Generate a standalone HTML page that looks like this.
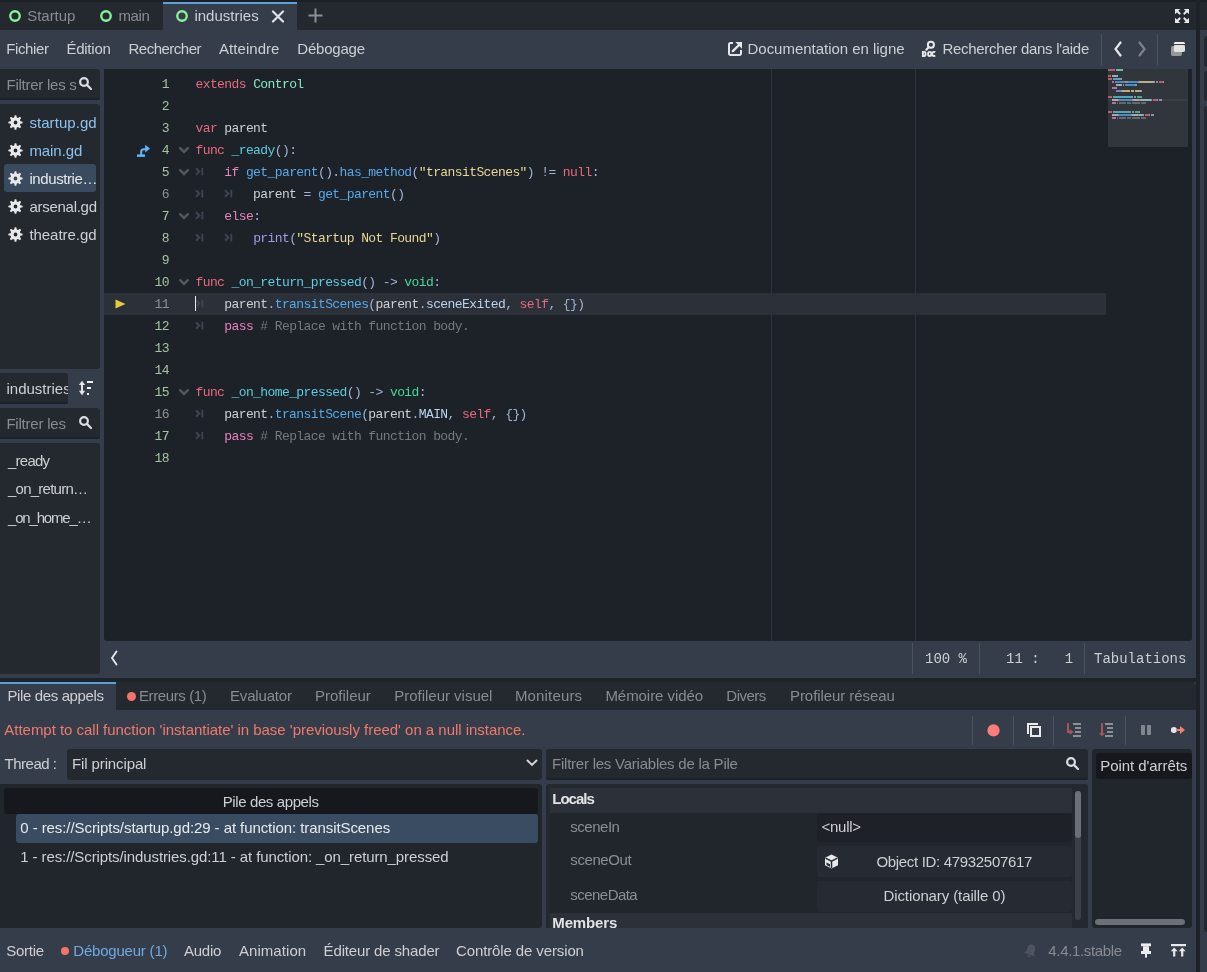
<!DOCTYPE html>
<html><head><meta charset="utf-8"><style>
html,body{margin:0;padding:0;width:1207px;height:972px;overflow:hidden;background:#363d4a;}
body>div,body>svg,body div,body svg{position:absolute;}
span{position:static !important;}
</style></head><body>
<div id="root" style="left:0;top:0;width:1207px;height:972px;overflow:hidden;will-change:transform;background:#363d4a">
<div style="left:0px;top:0px;width:1196px;height:30px;background:#24292f;"></div>
<div style="left:0px;top:0px;width:1207px;height:2px;background:#1c1f25;"></div>
<div style="left:163px;top:2px;width:134px;height:28px;background:#363d4a;"></div>
<div style="left:163px;top:2px;width:134px;height:2px;background:#5c9fd9;"></div>
<svg style="left:8px;top:9px" width="14" height="14" viewBox="0 0 14 14"><circle cx="7" cy="7" r="4.75" fill="none" stroke="#8cf29a" stroke-width="2.3"/></svg>
<svg style="left:99px;top:9px" width="14" height="14" viewBox="0 0 14 14"><circle cx="7" cy="7" r="4.75" fill="none" stroke="#8cf29a" stroke-width="2.3"/></svg>
<svg style="left:175px;top:9px" width="14" height="14" viewBox="0 0 14 14"><circle cx="7" cy="7" r="4.75" fill="none" stroke="#8cf29a" stroke-width="2.3"/></svg>
<div style="left:27.30px;top:8.10px;font-size:15px;line-height:15px;font-family:'Liberation Sans',sans-serif;color:#888b92;white-space:pre;letter-spacing:-0.050px;">Startup</div>
<div style="left:118.50px;top:8.10px;font-size:15px;line-height:15px;font-family:'Liberation Sans',sans-serif;color:#888b92;white-space:pre;letter-spacing:-0.400px;">main</div>
<div style="left:194.40px;top:8.10px;font-size:15px;line-height:15px;font-family:'Liberation Sans',sans-serif;color:#cdcfd2;white-space:pre;letter-spacing:0.011px;">industries</div>
<svg style="left:271px;top:10px" width="14" height="13" viewBox="0 0 14 13"><path d="M2 1.5L12 11.5M12 1.5L2 11.5" stroke="#e0e2e5" stroke-width="2.2" stroke-linecap="round"/></svg>
<svg style="left:307.5px;top:8.3px" width="15" height="15" viewBox="0 0 15 15"><path d="M7.5 0.5V14.5M0.5 7.5H14.5" stroke="#8a8e95" stroke-width="2"/></svg>
<svg style="left:1175px;top:9px" width="14" height="14" viewBox="0 0 14 14"><g fill="#e6e7e9"><path d="M0 0H5.2L0 5.2Z M14 0H8.8L14 5.2Z M0 14H5.2L0 8.8Z M14 14H8.8L14 8.8Z"/></g><path d="M1.5 1.5L4.6 4.6 M12.5 1.5L9.4 4.6 M1.5 12.5L4.6 9.4 M12.5 12.5L9.4 9.4" stroke="#e6e7e9" stroke-width="2.1" stroke-linecap="round"/></svg>
<div style="left:0px;top:30px;width:1196px;height:39px;background:#363d4a;"></div>
<div style="left:6.30px;top:41.20px;font-size:15px;line-height:15px;font-family:'Liberation Sans',sans-serif;color:#cdcfd2;white-space:pre;letter-spacing:-0.400px;">Fichier</div>
<div style="left:66.40px;top:41.20px;font-size:15px;line-height:15px;font-family:'Liberation Sans',sans-serif;color:#cdcfd2;white-space:pre;letter-spacing:-0.233px;">Édition</div>
<div style="left:128.50px;top:41.20px;font-size:15px;line-height:15px;font-family:'Liberation Sans',sans-serif;color:#cdcfd2;white-space:pre;letter-spacing:-0.500px;">Rechercher</div>
<div style="left:219.00px;top:41.20px;font-size:15px;line-height:15px;font-family:'Liberation Sans',sans-serif;color:#cdcfd2;white-space:pre;letter-spacing:0.050px;">Atteindre</div>
<div style="left:297.30px;top:41.20px;font-size:15px;line-height:15px;font-family:'Liberation Sans',sans-serif;color:#cdcfd2;white-space:pre;letter-spacing:-0.214px;">Débogage</div>
<svg style="left:727px;top:41px" width="16" height="16" viewBox="0 0 16 16"><path d="M6 2H3.5A1.5 1.5 0 0 0 2 3.5V12.5A1.5 1.5 0 0 0 3.5 14H12.5A1.5 1.5 0 0 0 14 12.5V9" fill="none" stroke="#e6e7e9" stroke-width="2"/><path d="M8.3 1H15V7.7Z" fill="#e6e7e9"/><path d="M12 4L5.8 10.2" stroke="#e6e7e9" stroke-width="2.4" stroke-linecap="round"/></svg>
<div style="left:747.50px;top:41.20px;font-size:15px;line-height:15px;font-family:'Liberation Sans',sans-serif;color:#cdcfd2;white-space:pre;letter-spacing:-0.024px;">Documentation en ligne</div>
<svg style="left:920px;top:40px" width="18" height="18" viewBox="0 0 18 18"><circle cx="10.9" cy="4.8" r="3.05" fill="none" stroke="#e6e7e9" stroke-width="2"/><path d="M8.7 7.2L6.3 9.7" stroke="#e6e7e9" stroke-width="2.1" stroke-linecap="round"/><path d="M2.9 11.9H4.1Q5.6 11.9 5.6 13.95Q5.6 16 4.1 16H2.9Z" fill="none" stroke="#e6e7e9" stroke-width="1.9"/><ellipse cx="9.7" cy="13.95" rx="1.65" ry="2.05" fill="none" stroke="#e6e7e9" stroke-width="1.9"/><path d="M15.3 12.2Q14.7 11.9 13.9 11.9Q12.2 11.9 12.2 13.95Q12.2 16 13.9 16Q14.7 16 15.3 15.7" fill="none" stroke="#e6e7e9" stroke-width="1.9"/></svg>
<div style="left:942.40px;top:41.20px;font-size:15px;line-height:15px;font-family:'Liberation Sans',sans-serif;color:#cdcfd2;white-space:pre;letter-spacing:-0.290px;">Rechercher dans l'aide</div>
<div style="left:1101px;top:34px;width:1px;height:31px;background:#4b5261;"></div>
<div style="left:1157px;top:34px;width:1px;height:31px;background:#4b5261;"></div>
<svg style="left:1113px;top:41px" width="10" height="16" viewBox="0 0 10 16"><path d="M7.5 1.5L2.5 8L7.5 14.5" fill="none" stroke="#e6e7e9" stroke-width="2.2" stroke-linecap="round"/></svg>
<svg style="left:1137px;top:41px" width="10" height="16" viewBox="0 0 10 16"><path d="M2.5 1.5L7.5 8L2.5 14.5" fill="none" stroke="#7c818a" stroke-width="2.2" stroke-linecap="round"/></svg>
<svg style="left:1170px;top:41px" width="16" height="16" viewBox="0 0 16 16"><rect x="1" y="4.9" width="10.9" height="10" rx="1.6" fill="#979797"/><path d="M3.8 3V2.6A1.6 1.6 0 0 1 5.4 1H13.4A1.6 1.6 0 0 1 15 2.6V3Z" fill="#efeff0"/><rect x="3.8" y="4" width="11.2" height="6.9" rx="1.4" fill="#e2e2e3"/></svg>
<div style="left:1196px;top:0px;width:4px;height:972px;background:#1e2229;"></div>
<div style="left:1200px;top:2px;width:7px;height:28px;background:#24292f;"></div>
<div style="left:1200px;top:30px;width:7px;height:942px;background:#363d4a;"></div>
<div style="left:1204px;top:36px;width:3px;height:31px;background:#24292f;border-radius:3px 0 0 3px"></div>
<div style="left:1204px;top:71px;width:3px;height:30px;background:#24292f;border-radius:3px 0 0 3px"></div>
<div style="left:1204px;top:106px;width:3px;height:826px;background:#24292f;border-radius:3px 0 0 3px"></div>
<div style="left:0px;top:69px;width:104px;height:609px;background:#363d4a;"></div>
<div style="left:0px;top:69px;width:100px;height:31px;background:#24292f;border-radius:0 3px 3px 0"></div>
<div style="left:0px;top:98px;width:100px;height:2px;background:#1d2128;border-radius:0 0 3px 0"></div>
<div style="left:6.50px;top:76.60px;font-size:15px;line-height:15px;font-family:'Liberation Sans',sans-serif;color:#888b92;white-space:pre;letter-spacing:-0.250px;">Filtrer les s</div>
<svg style="left:79px;top:77px" width="14" height="14" viewBox="0 0 14 14"><circle cx="5" cy="5" r="3.85" fill="none" stroke="#dcdde0" stroke-width="2.2"/><path d="M7.9 7.9L12 12" stroke="#dcdde0" stroke-width="2.2" stroke-linecap="round"/></svg>
<div style="left:0px;top:104px;width:100px;height:265px;background:#24292f;border-radius:0 3px 3px 0"></div>
<div style="left:4px;top:164px;width:92px;height:28px;background:#3b4b5f;border-radius:3px"></div>
<svg style="left:7.5px;top:114.5px" width="15" height="15" viewBox="0 0 15 15"><path d="M12.43 6.18 L14.65 6.68 L14.65 8.32 L12.43 8.82 L11.92 10.05 L13.13 11.98 L11.98 13.13 L10.05 11.92 L8.82 12.43 L8.32 14.65 L6.68 14.65 L6.18 12.43 L4.95 11.92 L3.02 13.13 L1.87 11.98 L3.08 10.05 L2.57 8.82 L0.35 8.32 L0.35 6.68 L2.57 6.18 L3.08 4.95 L1.87 3.02 L3.02 1.87 L4.95 3.08 L6.18 2.57 L6.68 0.35 L8.32 0.35 L8.82 2.57 L10.05 3.08 L11.98 1.87 L13.13 3.02 L11.92 4.95Z M7.5 5.6A1.9 1.9 0 1 0 7.5 9.4A1.9 1.9 0 1 0 7.5 5.6Z" fill="#e8e9eb" fill-rule="evenodd"/></svg>
<div style="left:29.40px;top:114.60px;font-size:15px;line-height:15px;font-family:'Liberation Sans',sans-serif;color:#8cc2f0;white-space:pre;letter-spacing:0.067px;">startup.gd</div>
<svg style="left:7.5px;top:142.5px" width="15" height="15" viewBox="0 0 15 15"><path d="M12.43 6.18 L14.65 6.68 L14.65 8.32 L12.43 8.82 L11.92 10.05 L13.13 11.98 L11.98 13.13 L10.05 11.92 L8.82 12.43 L8.32 14.65 L6.68 14.65 L6.18 12.43 L4.95 11.92 L3.02 13.13 L1.87 11.98 L3.08 10.05 L2.57 8.82 L0.35 8.32 L0.35 6.68 L2.57 6.18 L3.08 4.95 L1.87 3.02 L3.02 1.87 L4.95 3.08 L6.18 2.57 L6.68 0.35 L8.32 0.35 L8.82 2.57 L10.05 3.08 L11.98 1.87 L13.13 3.02 L11.92 4.95Z M7.5 5.6A1.9 1.9 0 1 0 7.5 9.4A1.9 1.9 0 1 0 7.5 5.6Z" fill="#e8e9eb" fill-rule="evenodd"/></svg>
<div style="left:29.40px;top:142.60px;font-size:15px;line-height:15px;font-family:'Liberation Sans',sans-serif;color:#8cc2f0;white-space:pre;letter-spacing:-0.067px;">main.gd</div>
<svg style="left:7.5px;top:170.5px" width="15" height="15" viewBox="0 0 15 15"><path d="M12.43 6.18 L14.65 6.68 L14.65 8.32 L12.43 8.82 L11.92 10.05 L13.13 11.98 L11.98 13.13 L10.05 11.92 L8.82 12.43 L8.32 14.65 L6.68 14.65 L6.18 12.43 L4.95 11.92 L3.02 13.13 L1.87 11.98 L3.08 10.05 L2.57 8.82 L0.35 8.32 L0.35 6.68 L2.57 6.18 L3.08 4.95 L1.87 3.02 L3.02 1.87 L4.95 3.08 L6.18 2.57 L6.68 0.35 L8.32 0.35 L8.82 2.57 L10.05 3.08 L11.98 1.87 L13.13 3.02 L11.92 4.95Z M7.5 5.6A1.9 1.9 0 1 0 7.5 9.4A1.9 1.9 0 1 0 7.5 5.6Z" fill="#e8e9eb" fill-rule="evenodd"/></svg>
<div style="left:29.40px;top:170.60px;font-size:15px;line-height:15px;font-family:'Liberation Sans',sans-serif;color:#e6e7e9;white-space:pre;letter-spacing:-0.400px;">industrie…</div>
<svg style="left:7.5px;top:198.5px" width="15" height="15" viewBox="0 0 15 15"><path d="M12.43 6.18 L14.65 6.68 L14.65 8.32 L12.43 8.82 L11.92 10.05 L13.13 11.98 L11.98 13.13 L10.05 11.92 L8.82 12.43 L8.32 14.65 L6.68 14.65 L6.18 12.43 L4.95 11.92 L3.02 13.13 L1.87 11.98 L3.08 10.05 L2.57 8.82 L0.35 8.32 L0.35 6.68 L2.57 6.18 L3.08 4.95 L1.87 3.02 L3.02 1.87 L4.95 3.08 L6.18 2.57 L6.68 0.35 L8.32 0.35 L8.82 2.57 L10.05 3.08 L11.98 1.87 L13.13 3.02 L11.92 4.95Z M7.5 5.6A1.9 1.9 0 1 0 7.5 9.4A1.9 1.9 0 1 0 7.5 5.6Z" fill="#e8e9eb" fill-rule="evenodd"/></svg>
<div style="left:29.40px;top:198.60px;font-size:15px;line-height:15px;font-family:'Liberation Sans',sans-serif;color:#cdcfd2;white-space:pre;letter-spacing:-0.267px;">arsenal.gd</div>
<svg style="left:7.5px;top:226.5px" width="15" height="15" viewBox="0 0 15 15"><path d="M12.43 6.18 L14.65 6.68 L14.65 8.32 L12.43 8.82 L11.92 10.05 L13.13 11.98 L11.98 13.13 L10.05 11.92 L8.82 12.43 L8.32 14.65 L6.68 14.65 L6.18 12.43 L4.95 11.92 L3.02 13.13 L1.87 11.98 L3.08 10.05 L2.57 8.82 L0.35 8.32 L0.35 6.68 L2.57 6.18 L3.08 4.95 L1.87 3.02 L3.02 1.87 L4.95 3.08 L6.18 2.57 L6.68 0.35 L8.32 0.35 L8.82 2.57 L10.05 3.08 L11.98 1.87 L13.13 3.02 L11.92 4.95Z M7.5 5.6A1.9 1.9 0 1 0 7.5 9.4A1.9 1.9 0 1 0 7.5 5.6Z" fill="#e8e9eb" fill-rule="evenodd"/></svg>
<div style="left:29.40px;top:226.60px;font-size:15px;line-height:15px;font-family:'Liberation Sans',sans-serif;color:#cdcfd2;white-space:pre;letter-spacing:-0.044px;">theatre.gd</div>
<div style="left:0px;top:373px;width:68px;height:31px;background:#24292f;border-radius:0 3px 3px 0"></div>
<div style="left:0px;top:402px;width:68px;height:2px;background:#1d2128;border-radius:0 0 3px 0"></div>
<div style="left:0;top:373px;width:68px;height:31px;overflow:hidden"><div style="left:6.5px;top:7.5px;font-size:15px;line-height:15px;font-family:'Liberation Sans',sans-serif;color:#cdcfd2;white-space:pre">industries</div></div>
<svg style="left:78px;top:380px" width="16" height="16" viewBox="0 0 16 16"><path d="M4 0.8L7.1 5H0.9Z M4 15.2L7.1 10.8H0.9Z" fill="#e4e5e7"/><rect x="3" y="4" width="2" height="8" fill="#e4e5e7"/><rect x="9" y="1" width="6" height="2" fill="#f0f0f2"/><rect x="9" y="7" width="4" height="2" fill="#f0f0f2"/><rect x="9" y="13" width="2" height="2" fill="#f0f0f2"/></svg>
<div style="left:0px;top:408px;width:100px;height:31px;background:#24292f;border-radius:0 3px 3px 0"></div>
<div style="left:0px;top:437px;width:100px;height:2px;background:#1d2128;border-radius:0 0 3px 0"></div>
<div style="left:6.40px;top:415.60px;font-size:15px;line-height:15px;font-family:'Liberation Sans',sans-serif;color:#888b92;white-space:pre;letter-spacing:-0.210px;">Filtrer les</div>
<svg style="left:79px;top:416px" width="14" height="14" viewBox="0 0 14 14"><circle cx="5" cy="5" r="3.85" fill="none" stroke="#dcdde0" stroke-width="2.2"/><path d="M7.9 7.9L12 12" stroke="#dcdde0" stroke-width="2.2" stroke-linecap="round"/></svg>
<div style="left:0px;top:443px;width:100px;height:231px;background:#24292f;border-radius:0 3px 3px 0"></div>
<div style="left:8.00px;top:453.00px;font-size:15px;line-height:15px;font-family:'Liberation Sans',sans-serif;color:#cdcfd2;white-space:pre;letter-spacing:-0.760px;">_ready</div>
<div style="left:8.00px;top:481.30px;font-size:15px;line-height:15px;font-family:'Liberation Sans',sans-serif;color:#cdcfd2;white-space:pre;letter-spacing:-0.750px;">_on_return…</div>
<div style="left:8.00px;top:509.60px;font-size:15px;line-height:15px;font-family:'Liberation Sans',sans-serif;color:#cdcfd2;white-space:pre;letter-spacing:-1.178px;">_on_home_…</div>
<div style="left:104px;top:69px;width:1092px;height:609px;background:#363d4a;"></div>
<div style="left:104px;top:69px;width:1088px;height:572px;background:#1d2128;border-radius:0 0 3px 3px"></div>
<div style="left:104px;top:293px;width:1002px;height:22px;background:#2c3038;"></div>
<div style="left:771px;top:69px;width:1px;height:572px;background:#2e333b;"></div>
<div style="left:915px;top:69px;width:1px;height:572px;background:#2e333b;"></div>
<div style="left:1108px;top:69px;width:80px;height:78px;background:#31353c;"></div>
<div style="left:1108px;top:99px;width:80px;height:2px;background:#3a3e45;"></div>
<div style="left:140px;top:78.5px;width:29px;text-align:right;font-size:13px;letter-spacing:-0.6px;line-height:12px;font-family:'Liberation Mono',monospace;color:#a6c4a3">1</div>
<div style="left:195.5px;top:78.5px;font-size:13px;letter-spacing:-0.6px;line-height:12px;font-family:'Liberation Mono',monospace;white-space:pre"><span style="color:#e86a7d">extends</span><span style="color:#cdcfd2"> </span><span style="color:#86e6c4">Control</span></div>
<div style="left:1108px;top:69px;width:7px;height:2px;background:#e86a7d;opacity:0.75"></div>
<div style="left:1116px;top:69px;width:7px;height:2px;background:#86e6c4;opacity:0.75"></div>
<div style="left:140px;top:100.5px;width:29px;text-align:right;font-size:13px;letter-spacing:-0.6px;line-height:12px;font-family:'Liberation Mono',monospace;color:#a6c4a3">2</div>
<div style="left:140px;top:122.5px;width:29px;text-align:right;font-size:13px;letter-spacing:-0.6px;line-height:12px;font-family:'Liberation Mono',monospace;color:#a6c4a3">3</div>
<div style="left:195.5px;top:122.5px;font-size:13px;letter-spacing:-0.6px;line-height:12px;font-family:'Liberation Mono',monospace;white-space:pre"><span style="color:#e86a7d">var</span><span style="color:#cdcfd2"> parent</span></div>
<div style="left:1108px;top:75px;width:3px;height:2px;background:#e86a7d;opacity:0.75"></div>
<div style="left:1112px;top:75px;width:6px;height:2px;background:#cdcfd2;opacity:0.75"></div>
<div style="left:140px;top:144.5px;width:29px;text-align:right;font-size:13px;letter-spacing:-0.6px;line-height:12px;font-family:'Liberation Mono',monospace;color:#a6c4a3">4</div>
<svg style="left:179px;top:147px" width="10" height="7" viewBox="0 0 10 7"><path d="M1.2 1.2L5 5L8.8 1.2" fill="none" stroke="#52565e" stroke-width="2.5" stroke-linecap="round"/></svg>
<div style="left:195.5px;top:144.5px;font-size:13px;letter-spacing:-0.6px;line-height:12px;font-family:'Liberation Mono',monospace;white-space:pre"><span style="color:#e86a7d">func</span><span style="color:#cdcfd2"> </span><span style="color:#5ccce2">_ready</span><span style="color:#9fb2d8">():</span></div>
<div style="left:1108px;top:78px;width:4px;height:2px;background:#e86a7d;opacity:0.75"></div>
<div style="left:1113px;top:78px;width:6px;height:2px;background:#5ccce2;opacity:0.75"></div>
<div style="left:1119px;top:78px;width:3px;height:2px;background:#9fb2d8;opacity:0.75"></div>
<div style="left:140px;top:166.5px;width:29px;text-align:right;font-size:13px;letter-spacing:-0.6px;line-height:12px;font-family:'Liberation Mono',monospace;color:#a6c4a3">5</div>
<svg style="left:179px;top:169px" width="10" height="7" viewBox="0 0 10 7"><path d="M1.2 1.2L5 5L8.8 1.2" fill="none" stroke="#52565e" stroke-width="2.5" stroke-linecap="round"/></svg>
<svg style="left:195.0px;top:167px" width="9" height="9" viewBox="0 0 9 9"><path d="M1 1.2L4.3 4.5L1 7.8" fill="none" stroke="#3d4555" stroke-width="2"/><rect x="6.4" y="0.8" width="1.8" height="7.6" fill="#3d4555"/></svg>
<div style="left:195.5px;top:166.5px;font-size:13px;letter-spacing:-0.6px;line-height:12px;font-family:'Liberation Mono',monospace;white-space:pre"><span style="color:#cdcfd2">    </span><span style="color:#e882c0">if</span><span style="color:#cdcfd2"> </span><span style="color:#57a9ea">get_parent</span><span style="color:#9fb2d8">().</span><span style="color:#57a9ea">has_method</span><span style="color:#9fb2d8">(</span><span style="color:#e8d695">"transitScenes"</span><span style="color:#9fb2d8">)</span><span style="color:#9fb2d8"> != </span><span style="color:#e86a7d">null</span><span style="color:#9fb2d8">:</span></div>
<div style="left:1112px;top:81px;width:2px;height:2px;background:#e882c0;opacity:0.75"></div>
<div style="left:1115px;top:81px;width:10px;height:2px;background:#57a9ea;opacity:0.75"></div>
<div style="left:1125px;top:81px;width:3px;height:2px;background:#9fb2d8;opacity:0.75"></div>
<div style="left:1128px;top:81px;width:10px;height:2px;background:#57a9ea;opacity:0.75"></div>
<div style="left:1138px;top:81px;width:1px;height:2px;background:#9fb2d8;opacity:0.75"></div>
<div style="left:1139px;top:81px;width:15px;height:2px;background:#e8d695;opacity:0.75"></div>
<div style="left:1154px;top:81px;width:1px;height:2px;background:#9fb2d8;opacity:0.75"></div>
<div style="left:1156px;top:81px;width:2px;height:2px;background:#9fb2d8;opacity:0.75"></div>
<div style="left:1159px;top:81px;width:4px;height:2px;background:#e86a7d;opacity:0.75"></div>
<div style="left:1163px;top:81px;width:1px;height:2px;background:#9fb2d8;opacity:0.75"></div>
<div style="left:140px;top:188.5px;width:29px;text-align:right;font-size:13px;letter-spacing:-0.6px;line-height:12px;font-family:'Liberation Mono',monospace;color:#8e9094">6</div>
<svg style="left:195.0px;top:189px" width="9" height="9" viewBox="0 0 9 9"><path d="M1 1.2L4.3 4.5L1 7.8" fill="none" stroke="#3d4555" stroke-width="2"/><rect x="6.4" y="0.8" width="1.8" height="7.6" fill="#3d4555"/></svg>
<svg style="left:223.8px;top:189px" width="9" height="9" viewBox="0 0 9 9"><path d="M1 1.2L4.3 4.5L1 7.8" fill="none" stroke="#3d4555" stroke-width="2"/><rect x="6.4" y="0.8" width="1.8" height="7.6" fill="#3d4555"/></svg>
<div style="left:195.5px;top:188.5px;font-size:13px;letter-spacing:-0.6px;line-height:12px;font-family:'Liberation Mono',monospace;white-space:pre"><span style="color:#cdcfd2">        parent</span><span style="color:#9fb2d8"> = </span><span style="color:#57a9ea">get_parent</span><span style="color:#9fb2d8">()</span></div>
<div style="left:1116px;top:84px;width:6px;height:2px;background:#cdcfd2;opacity:0.75"></div>
<div style="left:1123px;top:84px;width:1px;height:2px;background:#9fb2d8;opacity:0.75"></div>
<div style="left:1125px;top:84px;width:10px;height:2px;background:#57a9ea;opacity:0.75"></div>
<div style="left:1135px;top:84px;width:2px;height:2px;background:#9fb2d8;opacity:0.75"></div>
<div style="left:140px;top:210.5px;width:29px;text-align:right;font-size:13px;letter-spacing:-0.6px;line-height:12px;font-family:'Liberation Mono',monospace;color:#a6c4a3">7</div>
<svg style="left:179px;top:213px" width="10" height="7" viewBox="0 0 10 7"><path d="M1.2 1.2L5 5L8.8 1.2" fill="none" stroke="#52565e" stroke-width="2.5" stroke-linecap="round"/></svg>
<svg style="left:195.0px;top:211px" width="9" height="9" viewBox="0 0 9 9"><path d="M1 1.2L4.3 4.5L1 7.8" fill="none" stroke="#3d4555" stroke-width="2"/><rect x="6.4" y="0.8" width="1.8" height="7.6" fill="#3d4555"/></svg>
<div style="left:195.5px;top:210.5px;font-size:13px;letter-spacing:-0.6px;line-height:12px;font-family:'Liberation Mono',monospace;white-space:pre"><span style="color:#cdcfd2">    </span><span style="color:#e882c0">else</span><span style="color:#9fb2d8">:</span></div>
<div style="left:1112px;top:87px;width:4px;height:2px;background:#e882c0;opacity:0.75"></div>
<div style="left:1116px;top:87px;width:1px;height:2px;background:#9fb2d8;opacity:0.75"></div>
<div style="left:140px;top:232.5px;width:29px;text-align:right;font-size:13px;letter-spacing:-0.6px;line-height:12px;font-family:'Liberation Mono',monospace;color:#a6c4a3">8</div>
<svg style="left:195.0px;top:233px" width="9" height="9" viewBox="0 0 9 9"><path d="M1 1.2L4.3 4.5L1 7.8" fill="none" stroke="#3d4555" stroke-width="2"/><rect x="6.4" y="0.8" width="1.8" height="7.6" fill="#3d4555"/></svg>
<svg style="left:223.8px;top:233px" width="9" height="9" viewBox="0 0 9 9"><path d="M1 1.2L4.3 4.5L1 7.8" fill="none" stroke="#3d4555" stroke-width="2"/><rect x="6.4" y="0.8" width="1.8" height="7.6" fill="#3d4555"/></svg>
<div style="left:195.5px;top:232.5px;font-size:13px;letter-spacing:-0.6px;line-height:12px;font-family:'Liberation Mono',monospace;white-space:pre"><span style="color:#cdcfd2">        </span><span style="color:#a49ae6">print</span><span style="color:#9fb2d8">(</span><span style="color:#e8d695">"Startup Not Found"</span><span style="color:#9fb2d8">)</span></div>
<div style="left:1116px;top:90px;width:5px;height:2px;background:#a49ae6;opacity:0.75"></div>
<div style="left:1121px;top:90px;width:1px;height:2px;background:#9fb2d8;opacity:0.75"></div>
<div style="left:1122px;top:90px;width:8px;height:2px;background:#e8d695;opacity:0.75"></div>
<div style="left:1131px;top:90px;width:3px;height:2px;background:#e8d695;opacity:0.75"></div>
<div style="left:1135px;top:90px;width:6px;height:2px;background:#e8d695;opacity:0.75"></div>
<div style="left:1141px;top:90px;width:1px;height:2px;background:#9fb2d8;opacity:0.75"></div>
<div style="left:140px;top:254.5px;width:29px;text-align:right;font-size:13px;letter-spacing:-0.6px;line-height:12px;font-family:'Liberation Mono',monospace;color:#a6c4a3">9</div>
<div style="left:140px;top:276.5px;width:29px;text-align:right;font-size:13px;letter-spacing:-0.6px;line-height:12px;font-family:'Liberation Mono',monospace;color:#a6c4a3">10</div>
<svg style="left:179px;top:279px" width="10" height="7" viewBox="0 0 10 7"><path d="M1.2 1.2L5 5L8.8 1.2" fill="none" stroke="#52565e" stroke-width="2.5" stroke-linecap="round"/></svg>
<div style="left:195.5px;top:276.5px;font-size:13px;letter-spacing:-0.6px;line-height:12px;font-family:'Liberation Mono',monospace;white-space:pre"><span style="color:#e86a7d">func</span><span style="color:#cdcfd2"> </span><span style="color:#5ccce2">_on_return_pressed</span><span style="color:#9fb2d8">() -> </span><span style="color:#45d99c">void</span><span style="color:#9fb2d8">:</span></div>
<div style="left:1108px;top:96px;width:4px;height:2px;background:#e86a7d;opacity:0.75"></div>
<div style="left:1113px;top:96px;width:18px;height:2px;background:#5ccce2;opacity:0.75"></div>
<div style="left:1131px;top:96px;width:2px;height:2px;background:#9fb2d8;opacity:0.75"></div>
<div style="left:1134px;top:96px;width:2px;height:2px;background:#9fb2d8;opacity:0.75"></div>
<div style="left:1137px;top:96px;width:4px;height:2px;background:#45d99c;opacity:0.75"></div>
<div style="left:1141px;top:96px;width:1px;height:2px;background:#9fb2d8;opacity:0.75"></div>
<div style="left:140px;top:298.5px;width:29px;text-align:right;font-size:13px;letter-spacing:-0.6px;line-height:12px;font-family:'Liberation Mono',monospace;color:#8e9094">11</div>
<svg style="left:195.0px;top:299px" width="9" height="9" viewBox="0 0 9 9"><path d="M1 1.2L4.3 4.5L1 7.8" fill="none" stroke="#3d4555" stroke-width="2"/><rect x="6.4" y="0.8" width="1.8" height="7.6" fill="#3d4555"/></svg>
<div style="left:195.5px;top:298.5px;font-size:13px;letter-spacing:-0.6px;line-height:12px;font-family:'Liberation Mono',monospace;white-space:pre"><span style="color:#cdcfd2">    parent</span><span style="color:#9fb2d8">.</span><span style="color:#57a9ea">transitScenes</span><span style="color:#9fb2d8">(</span><span style="color:#cdcfd2">parent</span><span style="color:#9fb2d8">.</span><span style="color:#b9d3ee">sceneExited</span><span style="color:#9fb2d8">, </span><span style="color:#e86a7d">self</span><span style="color:#9fb2d8">, {})</span></div>
<div style="left:1112px;top:99px;width:6px;height:2px;background:#cdcfd2;opacity:0.75"></div>
<div style="left:1118px;top:99px;width:1px;height:2px;background:#9fb2d8;opacity:0.75"></div>
<div style="left:1119px;top:99px;width:13px;height:2px;background:#57a9ea;opacity:0.75"></div>
<div style="left:1132px;top:99px;width:1px;height:2px;background:#9fb2d8;opacity:0.75"></div>
<div style="left:1133px;top:99px;width:6px;height:2px;background:#cdcfd2;opacity:0.75"></div>
<div style="left:1139px;top:99px;width:1px;height:2px;background:#9fb2d8;opacity:0.75"></div>
<div style="left:1140px;top:99px;width:11px;height:2px;background:#b9d3ee;opacity:0.75"></div>
<div style="left:1151px;top:99px;width:1px;height:2px;background:#9fb2d8;opacity:0.75"></div>
<div style="left:1153px;top:99px;width:4px;height:2px;background:#e86a7d;opacity:0.75"></div>
<div style="left:1157px;top:99px;width:1px;height:2px;background:#9fb2d8;opacity:0.75"></div>
<div style="left:1159px;top:99px;width:3px;height:2px;background:#9fb2d8;opacity:0.75"></div>
<div style="left:140px;top:320.5px;width:29px;text-align:right;font-size:13px;letter-spacing:-0.6px;line-height:12px;font-family:'Liberation Mono',monospace;color:#a6c4a3">12</div>
<svg style="left:195.0px;top:321px" width="9" height="9" viewBox="0 0 9 9"><path d="M1 1.2L4.3 4.5L1 7.8" fill="none" stroke="#3d4555" stroke-width="2"/><rect x="6.4" y="0.8" width="1.8" height="7.6" fill="#3d4555"/></svg>
<div style="left:195.5px;top:320.5px;font-size:13px;letter-spacing:-0.6px;line-height:12px;font-family:'Liberation Mono',monospace;white-space:pre"><span style="color:#cdcfd2">    </span><span style="color:#e882c0">pass</span><span style="color:#76797e"> # Replace with function body.</span></div>
<div style="left:1112px;top:102px;width:4px;height:2px;background:#e882c0;opacity:0.75"></div>
<div style="left:1117px;top:102px;width:1px;height:2px;background:#76797e;opacity:0.75"></div>
<div style="left:1119px;top:102px;width:7px;height:2px;background:#76797e;opacity:0.75"></div>
<div style="left:1127px;top:102px;width:4px;height:2px;background:#76797e;opacity:0.75"></div>
<div style="left:1132px;top:102px;width:8px;height:2px;background:#76797e;opacity:0.75"></div>
<div style="left:1141px;top:102px;width:5px;height:2px;background:#76797e;opacity:0.75"></div>
<div style="left:140px;top:342.5px;width:29px;text-align:right;font-size:13px;letter-spacing:-0.6px;line-height:12px;font-family:'Liberation Mono',monospace;color:#a6c4a3">13</div>
<div style="left:140px;top:364.5px;width:29px;text-align:right;font-size:13px;letter-spacing:-0.6px;line-height:12px;font-family:'Liberation Mono',monospace;color:#a6c4a3">14</div>
<div style="left:140px;top:386.5px;width:29px;text-align:right;font-size:13px;letter-spacing:-0.6px;line-height:12px;font-family:'Liberation Mono',monospace;color:#a6c4a3">15</div>
<svg style="left:179px;top:389px" width="10" height="7" viewBox="0 0 10 7"><path d="M1.2 1.2L5 5L8.8 1.2" fill="none" stroke="#52565e" stroke-width="2.5" stroke-linecap="round"/></svg>
<div style="left:195.5px;top:386.5px;font-size:13px;letter-spacing:-0.6px;line-height:12px;font-family:'Liberation Mono',monospace;white-space:pre"><span style="color:#e86a7d">func</span><span style="color:#cdcfd2"> </span><span style="color:#5ccce2">_on_home_pressed</span><span style="color:#9fb2d8">() -> </span><span style="color:#45d99c">void</span><span style="color:#9fb2d8">:</span></div>
<div style="left:1108px;top:111px;width:4px;height:2px;background:#e86a7d;opacity:0.75"></div>
<div style="left:1113px;top:111px;width:16px;height:2px;background:#5ccce2;opacity:0.75"></div>
<div style="left:1129px;top:111px;width:2px;height:2px;background:#9fb2d8;opacity:0.75"></div>
<div style="left:1132px;top:111px;width:2px;height:2px;background:#9fb2d8;opacity:0.75"></div>
<div style="left:1135px;top:111px;width:4px;height:2px;background:#45d99c;opacity:0.75"></div>
<div style="left:1139px;top:111px;width:1px;height:2px;background:#9fb2d8;opacity:0.75"></div>
<div style="left:140px;top:408.5px;width:29px;text-align:right;font-size:13px;letter-spacing:-0.6px;line-height:12px;font-family:'Liberation Mono',monospace;color:#8e9094">16</div>
<svg style="left:195.0px;top:409px" width="9" height="9" viewBox="0 0 9 9"><path d="M1 1.2L4.3 4.5L1 7.8" fill="none" stroke="#3d4555" stroke-width="2"/><rect x="6.4" y="0.8" width="1.8" height="7.6" fill="#3d4555"/></svg>
<div style="left:195.5px;top:408.5px;font-size:13px;letter-spacing:-0.6px;line-height:12px;font-family:'Liberation Mono',monospace;white-space:pre"><span style="color:#cdcfd2">    parent</span><span style="color:#9fb2d8">.</span><span style="color:#57a9ea">transitScene</span><span style="color:#9fb2d8">(</span><span style="color:#cdcfd2">parent</span><span style="color:#9fb2d8">.</span><span style="color:#b9d3ee">MAIN</span><span style="color:#9fb2d8">, </span><span style="color:#e86a7d">self</span><span style="color:#9fb2d8">, {})</span></div>
<div style="left:1112px;top:114px;width:6px;height:2px;background:#cdcfd2;opacity:0.75"></div>
<div style="left:1118px;top:114px;width:1px;height:2px;background:#9fb2d8;opacity:0.75"></div>
<div style="left:1119px;top:114px;width:12px;height:2px;background:#57a9ea;opacity:0.75"></div>
<div style="left:1131px;top:114px;width:1px;height:2px;background:#9fb2d8;opacity:0.75"></div>
<div style="left:1132px;top:114px;width:6px;height:2px;background:#cdcfd2;opacity:0.75"></div>
<div style="left:1138px;top:114px;width:1px;height:2px;background:#9fb2d8;opacity:0.75"></div>
<div style="left:1139px;top:114px;width:4px;height:2px;background:#b9d3ee;opacity:0.75"></div>
<div style="left:1143px;top:114px;width:1px;height:2px;background:#9fb2d8;opacity:0.75"></div>
<div style="left:1145px;top:114px;width:4px;height:2px;background:#e86a7d;opacity:0.75"></div>
<div style="left:1149px;top:114px;width:1px;height:2px;background:#9fb2d8;opacity:0.75"></div>
<div style="left:1151px;top:114px;width:3px;height:2px;background:#9fb2d8;opacity:0.75"></div>
<div style="left:140px;top:430.5px;width:29px;text-align:right;font-size:13px;letter-spacing:-0.6px;line-height:12px;font-family:'Liberation Mono',monospace;color:#a6c4a3">17</div>
<svg style="left:195.0px;top:431px" width="9" height="9" viewBox="0 0 9 9"><path d="M1 1.2L4.3 4.5L1 7.8" fill="none" stroke="#3d4555" stroke-width="2"/><rect x="6.4" y="0.8" width="1.8" height="7.6" fill="#3d4555"/></svg>
<div style="left:195.5px;top:430.5px;font-size:13px;letter-spacing:-0.6px;line-height:12px;font-family:'Liberation Mono',monospace;white-space:pre"><span style="color:#cdcfd2">    </span><span style="color:#e882c0">pass</span><span style="color:#76797e"> # Replace with function body.</span></div>
<div style="left:1112px;top:117px;width:4px;height:2px;background:#e882c0;opacity:0.75"></div>
<div style="left:1117px;top:117px;width:1px;height:2px;background:#76797e;opacity:0.75"></div>
<div style="left:1119px;top:117px;width:7px;height:2px;background:#76797e;opacity:0.75"></div>
<div style="left:1127px;top:117px;width:4px;height:2px;background:#76797e;opacity:0.75"></div>
<div style="left:1132px;top:117px;width:8px;height:2px;background:#76797e;opacity:0.75"></div>
<div style="left:1141px;top:117px;width:5px;height:2px;background:#76797e;opacity:0.75"></div>
<div style="left:140px;top:452.5px;width:29px;text-align:right;font-size:13px;letter-spacing:-0.6px;line-height:12px;font-family:'Liberation Mono',monospace;color:#a6c4a3">18</div>
<div style="left:195.2px;top:296px;width:1.3px;height:15px;background:#e8e8ea;"></div>
<svg style="left:136px;top:144px" width="16" height="14" viewBox="0 0 16 14"><path d="M1 11.65H9" stroke="#62b4f8" stroke-width="2.5"/><path d="M5.2 11V7.9Q5.2 5.2 7.9 5.2H10" fill="none" stroke="#62b4f8" stroke-width="2.1"/><path d="M9.2 0.7L14.1 4.6L9.2 8.4Z" fill="#62b4f8"/></svg>
<svg style="left:115px;top:299px" width="11" height="10" viewBox="0 0 11 10"><path d="M0.5 0.5L10.5 5L0.5 9.5Z" fill="#e4cc3a"/></svg>
<svg style="left:110px;top:650px" width="9" height="16" viewBox="0 0 9 16"><path d="M6.5 1.5L2 8L6.5 14.5" fill="none" stroke="#e6e7e9" stroke-width="1.9" stroke-linecap="round"/></svg>
<div style="left:912px;top:643px;width:1px;height:31px;background:#4b5261;"></div>
<div style="left:979px;top:643px;width:1px;height:31px;background:#4b5261;"></div>
<div style="left:1084px;top:643px;width:1px;height:31px;background:#4b5261;"></div>
<div style="left:925px;top:651.5px;font-size:14px;line-height:14px;font-family:'Liberation Mono',monospace;color:#cdcfd2;white-space:pre">100 %</div>
<div style="left:1006px;top:651.5px;font-size:14px;line-height:14px;font-family:'Liberation Mono',monospace;color:#cdcfd2;white-space:pre">11 :   1</div>
<div style="left:1094px;top:651.5px;font-size:14px;line-height:14px;font-family:'Liberation Mono',monospace;color:#cdcfd2;white-space:pre">Tabulations</div>
<div style="left:0px;top:678px;width:1196px;height:4px;background:#1e2229;"></div>
<div style="left:0px;top:682px;width:1196px;height:246px;background:#363d4a;"></div>
<div style="left:116px;top:682px;width:1080px;height:28px;background:#24292f;border-radius:0 3px 0 0"></div>
<div style="left:0px;top:682px;width:116px;height:2px;background:#5c9fd9;"></div>
<div style="left:7.40px;top:687.90px;font-size:15px;line-height:15px;font-family:'Liberation Sans',sans-serif;color:#cdcfd2;white-space:pre;letter-spacing:-0.364px;">Pile des appels</div>
<div style="left:127px;top:692px;width:9px;height:9px;border-radius:50%;background:#f3756a"></div>
<div style="left:139.00px;top:687.90px;font-size:15px;line-height:15px;font-family:'Liberation Sans',sans-serif;color:#888b92;white-space:pre;letter-spacing:-0.400px;">Erreurs (1)</div>
<div style="left:230.00px;top:687.90px;font-size:15px;line-height:15px;font-family:'Liberation Sans',sans-serif;color:#888b92;white-space:pre;letter-spacing:-0.175px;">Evaluator</div>
<div style="left:315.00px;top:687.90px;font-size:15px;line-height:15px;font-family:'Liberation Sans',sans-serif;color:#888b92;white-space:pre;">Profileur</div>
<div style="left:394.30px;top:687.90px;font-size:15px;line-height:15px;font-family:'Liberation Sans',sans-serif;color:#888b92;white-space:pre;letter-spacing:-0.020px;">Profileur visuel</div>
<div style="left:514.90px;top:687.90px;font-size:15px;line-height:15px;font-family:'Liberation Sans',sans-serif;color:#888b92;white-space:pre;letter-spacing:0.163px;">Moniteurs</div>
<div style="left:605.40px;top:687.90px;font-size:15px;line-height:15px;font-family:'Liberation Sans',sans-serif;color:#888b92;white-space:pre;letter-spacing:-0.050px;">Mémoire vidéo</div>
<div style="left:726.30px;top:687.90px;font-size:15px;line-height:15px;font-family:'Liberation Sans',sans-serif;color:#888b92;white-space:pre;letter-spacing:-0.500px;">Divers</div>
<div style="left:790.00px;top:687.90px;font-size:15px;line-height:15px;font-family:'Liberation Sans',sans-serif;color:#888b92;white-space:pre;letter-spacing:-0.067px;">Profileur réseau</div>
<div style="left:4.30px;top:722.10px;font-size:15px;line-height:15px;font-family:'Liberation Sans',sans-serif;color:#f0796c;white-space:pre;letter-spacing:-0.026px;">Attempt to call function 'instantiate' in base 'previously freed' on a null instance.</div>
<div style="left:972px;top:716px;width:1px;height:29px;background:#4b5261;"></div>
<div style="left:1013px;top:716px;width:1px;height:29px;background:#4b5261;"></div>
<div style="left:1053px;top:716px;width:1px;height:29px;background:#4b5261;"></div>
<div style="left:1125px;top:716px;width:1px;height:29px;background:#4b5261;"></div>
<svg style="left:987px;top:724px" width="13" height="13" viewBox="0 0 13 13"><circle cx="6.5" cy="6.4" r="6.1" fill="#fc7b7b"/></svg>
<svg style="left:1026px;top:722px" width="16" height="16" viewBox="0 0 16 16"><path d="M2 12V2H12" fill="none" stroke="#ececee" stroke-width="2"/><rect x="5" y="5" width="9" height="9" fill="none" stroke="#ececee" stroke-width="2"/></svg>
<svg style="left:1066px;top:722px" width="16" height="16" viewBox="0 0 16 16"><rect x="1" y="1" width="2" height="10" fill="#a35656"/><rect x="1" y="9" width="3.5" height="2" fill="#a35656"/><path d="M3.7 7L7.7 10L3.7 13Z" fill="#a35656"/><rect x="7" y="1" width="8" height="2" fill="#8c9099"/><rect x="9" y="5" width="6" height="2" fill="#8c9099"/><rect x="9" y="9" width="6" height="2" fill="#8c9099"/><rect x="7" y="13" width="8" height="2" fill="#8c9099"/></svg>
<svg style="left:1098px;top:722px" width="16" height="16" viewBox="0 0 16 16"><rect x="3" y="1" width="2" height="10.5" fill="#a35656"/><path d="M1 11H7L4 14.6Z" fill="#a35656"/><rect x="7" y="1" width="8" height="2" fill="#8c9099"/><rect x="9" y="5" width="6" height="2" fill="#8c9099"/><rect x="9" y="9" width="6" height="2" fill="#8c9099"/><rect x="7" y="13" width="8" height="2" fill="#8c9099"/></svg>
<svg style="left:1141px;top:725px" width="10" height="10" viewBox="0 0 10 10"><rect x="0" y="0" width="4" height="10" rx="0.8" fill="#82868e"/><rect x="6" y="0" width="4" height="10" rx="0.8" fill="#82868e"/></svg>
<svg style="left:1170px;top:725px" width="16" height="10" viewBox="0 0 16 10"><circle cx="3.9" cy="4.9" r="3" fill="#e6e6e8"/><rect x="6" y="4" width="5" height="2" fill="#ff7a6e"/><path d="M10 1L15 4.9L10 8.9Z" fill="#ff7a6e"/></svg>
<div style="left:4.60px;top:756.10px;font-size:15px;line-height:15px;font-family:'Liberation Sans',sans-serif;color:#cdcfd2;white-space:pre;letter-spacing:-0.514px;">Thread :</div>
<div style="left:67px;top:749px;width:475px;height:31px;background:#24292f;border-radius:3px"></div>
<div style="left:72.00px;top:756.10px;font-size:15px;line-height:15px;font-family:'Liberation Sans',sans-serif;color:#cdcfd2;white-space:pre;letter-spacing:-0.117px;">Fil principal</div>
<svg style="left:526px;top:759px" width="12" height="8" viewBox="0 0 12 8"><path d="M1.5 1.5L6 6L10.5 1.5" fill="none" stroke="#d5d7da" stroke-width="1.9" stroke-linecap="round"/></svg>
<div style="left:546px;top:749px;width:542px;height:31px;background:#24292f;border-radius:3px"></div>
<div style="left:546px;top:778px;width:542px;height:2px;background:#1d2128;border-radius:0 0 3px 3px"></div>
<div style="left:552.00px;top:756.10px;font-size:15px;line-height:15px;font-family:'Liberation Sans',sans-serif;color:#888b92;white-space:pre;letter-spacing:-0.232px;">Filtrer les Variables de la Pile</div>
<svg style="left:1066px;top:757px" width="14" height="14" viewBox="0 0 14 14"><circle cx="5" cy="5" r="3.85" fill="none" stroke="#dcdde0" stroke-width="2.2"/><path d="M7.9 7.9L12 12" stroke="#dcdde0" stroke-width="2.2" stroke-linecap="round"/></svg>
<div style="left:0px;top:784px;width:542px;height:144px;background:#21252c;border-radius:0 3px 3px 0"></div>
<div style="left:4px;top:788px;width:534px;height:26px;background:#16181e;border-radius:3px"></div>
<div style="left:222.70px;top:793.70px;font-size:15px;line-height:15px;font-family:'Liberation Sans',sans-serif;color:#cdcfd2;white-space:pre;letter-spacing:-0.386px;">Pile des appels</div>
<div style="left:16px;top:814px;width:522px;height:29px;background:#3a4c62;border-radius:3px"></div>
<div style="left:20.30px;top:820.30px;font-size:15px;line-height:15px;font-family:'Liberation Sans',sans-serif;color:#e8e9eb;white-space:pre;letter-spacing:-0.076px;">0 - res://Scripts/startup.gd:29 - at function: transitScenes</div>
<div style="left:20.30px;top:849.30px;font-size:15px;line-height:15px;font-family:'Liberation Sans',sans-serif;color:#cdcfd2;white-space:pre;letter-spacing:-0.099px;">1 - res://Scripts/industries.gd:11 - at function: _on_return_pressed</div>
<div style="left:546px;top:784px;width:542px;height:144px;background:#24292f;border-radius:3px 3px 0 0"></div>
<div style="left:550px;top:813px;width:522px;height:115px;background:#21252c;"></div>
<div style="left:550px;top:788px;width:522px;height:25px;background:#2c3139;"></div>
<div style="left:552.30px;top:791.10px;font-size:15px;line-height:15px;font-family:'Liberation Sans',sans-serif;color:#e2e3e5;white-space:pre;letter-spacing:-1.000px;font-weight:bold;">Locals</div>
<div style="left:817px;top:813px;width:255px;height:29px;background:#1e2128;border-radius:3px"></div>
<div style="left:570.30px;top:818.60px;font-size:15px;line-height:15px;font-family:'Liberation Sans',sans-serif;color:#8b8e94;white-space:pre;letter-spacing:-0.483px;">sceneIn</div>
<div style="left:821.50px;top:819.20px;font-size:15px;line-height:15px;font-family:'Liberation Sans',sans-serif;color:#cdcfd2;white-space:pre;letter-spacing:-0.260px;">&lt;null&gt;</div>
<div style="left:817px;top:846px;width:255px;height:31px;background:#262b33;border-radius:3px"></div>
<div style="left:570.30px;top:852.40px;font-size:15px;line-height:15px;font-family:'Liberation Sans',sans-serif;color:#8b8e94;white-space:pre;letter-spacing:-0.414px;">sceneOut</div>
<svg style="left:823.5px;top:853.5px" width="15" height="15" viewBox="0 0 15 15"><path d="M7.5 0.5L14 3.8V11.2L7.5 14.5L1 11.2V3.8Z" fill="#e8e9eb"/><path d="M1.5 4.1L7.5 7.2L13.5 4.1 M7.5 7.2V14" fill="none" stroke="#262b33" stroke-width="1.5"/><path d="M2.5 8.5L6 10.3V12.8L2.5 11Z" fill="#262b33"/></svg>
<div style="left:876.40px;top:853.50px;font-size:15px;line-height:15px;font-family:'Liberation Sans',sans-serif;color:#cdcfd2;white-space:pre;letter-spacing:-0.319px;">Object ID: 47932507617</div>
<div style="left:817px;top:881px;width:255px;height:31px;background:#262b33;border-radius:3px"></div>
<div style="left:570.30px;top:887.00px;font-size:15px;line-height:15px;font-family:'Liberation Sans',sans-serif;color:#8b8e94;white-space:pre;letter-spacing:-0.537px;">sceneData</div>
<div style="left:883.50px;top:888.40px;font-size:15px;line-height:15px;font-family:'Liberation Sans',sans-serif;color:#cdcfd2;white-space:pre;letter-spacing:-0.105px;">Dictionary (taille 0)</div>
<div style="left:550px;top:913px;width:522px;height:15px;background:#2c3139;"></div>
<div style="left:552.30px;top:915.00px;font-size:15px;line-height:15px;font-family:'Liberation Sans',sans-serif;color:#e2e3e5;white-space:pre;letter-spacing:-0.150px;font-weight:bold;">Members</div>
<div style="left:1075px;top:791px;width:6px;height:129px;background:#3a3f48;border-radius:3px"></div>
<div style="left:1075px;top:791px;width:6px;height:47px;background:#6c7079;border-radius:3px"></div>
<div style="left:1092px;top:749px;width:100px;height:179px;background:#21252c;border-radius:3px"></div>
<div style="left:1096px;top:753px;width:96px;height:26px;background:#16181e;border-radius:3px"></div>
<div style="left:1100.30px;top:757.80px;font-size:15px;line-height:15px;font-family:'Liberation Sans',sans-serif;color:#cdcfd2;white-space:pre;letter-spacing:-0.069px;">Point d'arrêts</div>
<div style="left:1095px;top:919px;width:90px;height:6px;background:#6c7079;border-radius:3px"></div>
<div style="left:0px;top:928px;width:1196px;height:44px;background:#363d4a;"></div>
<div style="left:6.20px;top:943.30px;font-size:15px;line-height:15px;font-family:'Liberation Sans',sans-serif;color:#cdcfd2;white-space:pre;letter-spacing:-0.240px;">Sortie</div>
<div style="left:61px;top:947px;width:8px;height:8px;border-radius:50%;background:#f3756a"></div>
<div style="left:73.30px;top:943.30px;font-size:15px;line-height:15px;font-family:'Liberation Sans',sans-serif;color:#6fa9e3;white-space:pre;letter-spacing:-0.208px;">Débogueur (1)</div>
<div style="left:184.00px;top:943.30px;font-size:15px;line-height:15px;font-family:'Liberation Sans',sans-serif;color:#cdcfd2;white-space:pre;letter-spacing:-0.250px;">Audio</div>
<div style="left:238.90px;top:943.30px;font-size:15px;line-height:15px;font-family:'Liberation Sans',sans-serif;color:#cdcfd2;white-space:pre;letter-spacing:0.075px;">Animation</div>
<div style="left:323.60px;top:943.30px;font-size:15px;line-height:15px;font-family:'Liberation Sans',sans-serif;color:#cdcfd2;white-space:pre;letter-spacing:-0.150px;">Éditeur de shader</div>
<div style="left:456.00px;top:943.30px;font-size:15px;line-height:15px;font-family:'Liberation Sans',sans-serif;color:#cdcfd2;white-space:pre;letter-spacing:-0.117px;">Contrôle de version</div>
<svg style="left:1023px;top:943px" width="15" height="16" viewBox="0 0 15 16"><g transform="rotate(18 7.5 8)"><path d="M7.5 1.5C4.6 1.5 3.5 3.8 3.5 6.2V9.3L1.8 11.8H13.2L11.5 9.3V6.2C11.5 3.8 10.4 1.5 7.5 1.5Z M6 12.6H9V14.2H6Z" fill="#4d5361"/></g></svg>
<div style="left:1048.30px;top:943.30px;font-size:15px;line-height:15px;font-family:'Liberation Sans',sans-serif;color:#888b92;white-space:pre;letter-spacing:-0.336px;">4.4.1.stable</div>
<svg style="left:1140px;top:943px" width="12" height="15" viewBox="0 0 12 15"><rect x="1" y="0.4" width="10" height="2.8" fill="#ececee"/><rect x="3" y="3.2" width="6" height="5" fill="#ececee"/><rect x="1" y="8" width="10" height="3" fill="#ececee"/><rect x="5" y="11" width="2" height="3.6" fill="#ececee"/></svg>
<svg style="left:1170px;top:943px" width="16" height="15" viewBox="0 0 16 15"><rect x="1" y="1" width="15" height="2.2" fill="#e8e9eb"/><path d="M4.2 4.5L7.6 8.3H5.3V13.5H3.1V8.3H0.8Z M12.2 4.5L15.6 8.3H13.3V13.5H11.1V8.3H8.8Z" fill="#e8e9eb"/></svg>
</div></body></html>
